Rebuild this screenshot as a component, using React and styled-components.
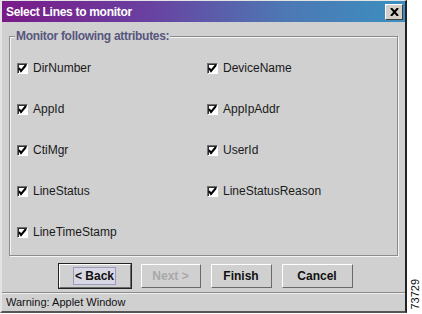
import styled, { createGlobalStyle } from "styled-components";

const GlobalStyle = createGlobalStyle`
  html, body {
    margin: 0;
    padding: 0;
    background: #fff;
  }
`;

const attributes = [
  ["DirNumber", "DeviceName"],
  ["AppId", "AppIpAddr"],
  ["CtiMgr", "UserId"],
  ["LineStatus", "LineStatusReason"],
  ["LineTimeStamp", null],
];

const Check = ({ label }) => (
  <CheckItem>
    <Box>
      <svg width="9" height="9" viewBox="0 0 9 9">
        <path d="M1 4 L3 7 L8 1" stroke="#000" strokeWidth="2" fill="none" />
      </svg>
    </Box>
    <span>{label}</span>
  </CheckItem>
);

const App = () => {
  return (
    <>
      <GlobalStyle />
      <Page>
        <Window>
          <TitleBar>
            <Title>Select Lines to monitor</Title>
            <CloseButton>
              <svg width="9" height="8" viewBox="0 0 9 8">
                <path d="M1 0 L8 8 M8 0 L1 8" stroke="#000" strokeWidth="2" />
              </svg>
            </CloseButton>
          </TitleBar>
          <Body>
            <Group>
              <Legend>Monitor following attributes:</Legend>
              <Grid>
                {attributes.map(([a, b]) => (
                  <Row key={a}>
                    <Check label={a} />
                    {b ? <Check label={b} /> : <span />}
                  </Row>
                ))}
              </Grid>
            </Group>
            <Buttons>
              <Button $width={72} $focus>
                <FocusText>&lt; Back</FocusText>
              </Button>
              <Button $width={60} $disabled>
                Next &gt;
              </Button>
              <Button $width={61}>Finish</Button>
              <Button $width={71}>Cancel</Button>
            </Buttons>
          </Body>
          <StatusBar>Warning: Applet Window</StatusBar>
        </Window>
        <Side>
          <Figure>73729</Figure>
        </Side>
      </Page>
    </>
  );
};

export default App;

const Page = styled.div`
  display: flex;
  width: 422px;
  height: 314px;
  background: #fff;
`;

const Window = styled.div`
  width: 403px;
  height: 310px;
  display: flex;
  flex-direction: column;
  background: #d0d0d0;
  border-left: 2px solid #e4e4e4;
  border-top: 1px solid #e4e4e4;
  border-right: 2px solid #222;
  border-bottom: 2px solid #555;
  font-family: "Liberation Sans", Arial, sans-serif;
`;

const TitleBar = styled.div`
  height: 21px;
  display: flex;
  align-items: center;
  justify-content: space-between;
  padding: 0 2px 0 4px;
  background: linear-gradient(90deg, #7a1a88 0%, #6a3fa0 35%, #4d78b4 70%, #3b8fc0 100%);
`;

const Title = styled.div`
  color: #fff;
  font-family: "Liberation Sans", Arial, sans-serif;
  font-weight: bold;
  font-size: 12px;
  letter-spacing: -0.3px;
`;

const CloseButton = styled.div`
  width: 16px;
  height: 14px;
  display: flex;
  align-items: center;
  justify-content: center;
  background: #d4d0c8;
  border-top: 1px solid #fff;
  border-left: 1px solid #fff;
  border-right: 1px solid #404040;
  border-bottom: 1px solid #404040;
`;

const Body = styled.div`
  flex: 1;
  display: flex;
  flex-direction: column;
  padding: 14px 7px 0 7px;
`;

const Group = styled.div`
  position: relative;
  height: 220px;
  border: 1px solid #8c8c8c;
  box-shadow: inset 1px 1px 0 #f4f4f4, 1px 1px 0 #f4f4f4;
  padding: 24px 0 0 7px;
  box-sizing: border-box;
`;

const Legend = styled.div`
  position: absolute;
  top: -8px;
  left: 5px;
  padding: 0 1px;
  background: #d0d0d0;
  color: #56567e;
  font-family: "Liberation Sans", Arial, sans-serif;
  font-weight: bold;
  font-size: 12px;
  letter-spacing: -0.3px;
`;

const Grid = styled.div`
  display: flex;
  flex-direction: column;
  gap: 27px;
`;

const Row = styled.div`
  display: grid;
  grid-template-columns: 190px 1fr;
  height: 14px;
`;

const CheckItem = styled.div`
  display: flex;
  align-items: center;
  gap: 5px;
  font-size: 12px;
  color: #1a1a1a;
`;

const Box = styled.div`
  width: 11px;
  height: 11px;
  box-sizing: border-box;
  background: #fff;
  border-top: 1px solid #707070;
  border-left: 1px solid #707070;
  border-right: 1px solid #fff;
  border-bottom: 1px solid #fff;
  box-shadow: inset 1px 1px 0 #303030;
  display: flex;
  align-items: center;
  justify-content: center;
`;

const Buttons = styled.div`
  display: flex;
  justify-content: center;
  gap: 10px;
  margin-top: 8px;
  padding-left: 4px;
`;

const Button = styled.div`
  width: ${({ $width }) => $width}px;
  height: 24px;
  box-sizing: border-box;
  display: flex;
  align-items: center;
  justify-content: center;
  background: #d0d0d0;
  border-top: 1px solid #fff;
  border-left: 1px solid #fff;
  border-right: 1px solid #6a6a6a;
  border-bottom: 1px solid #6a6a6a;
  outline: ${({ $focus }) => ($focus ? "1px solid #222" : "none")};
  font-weight: bold;
  font-size: 12px;
  color: ${({ $disabled }) => ($disabled ? "#a8a8a8" : "#111")};
`;

const FocusText = styled.span`
  border: 1px solid #9a9ac0;
  background: #d8d8e4;
  padding: 1px 1px;
  line-height: 14px;
`;

const StatusBar = styled.div`
  height: 18px;
  margin-top: 3px;
  display: flex;
  align-items: center;
  padding-left: 4px;
  border-top: 1px solid #8a8a8a;
  box-shadow: inset 0 1px 0 #f0f0f0;
  font-size: 11px;
  color: #111;
`;

const Side = styled.div`
  flex: 1;
  display: flex;
  align-items: flex-end;
  justify-content: center;
  padding-bottom: 4px;
`;

const Figure = styled.div`
  writing-mode: vertical-rl;
  transform: rotate(180deg);
  font-size: 11px;
  color: #111;
  font-family: "Liberation Sans", Arial, sans-serif;
`;
